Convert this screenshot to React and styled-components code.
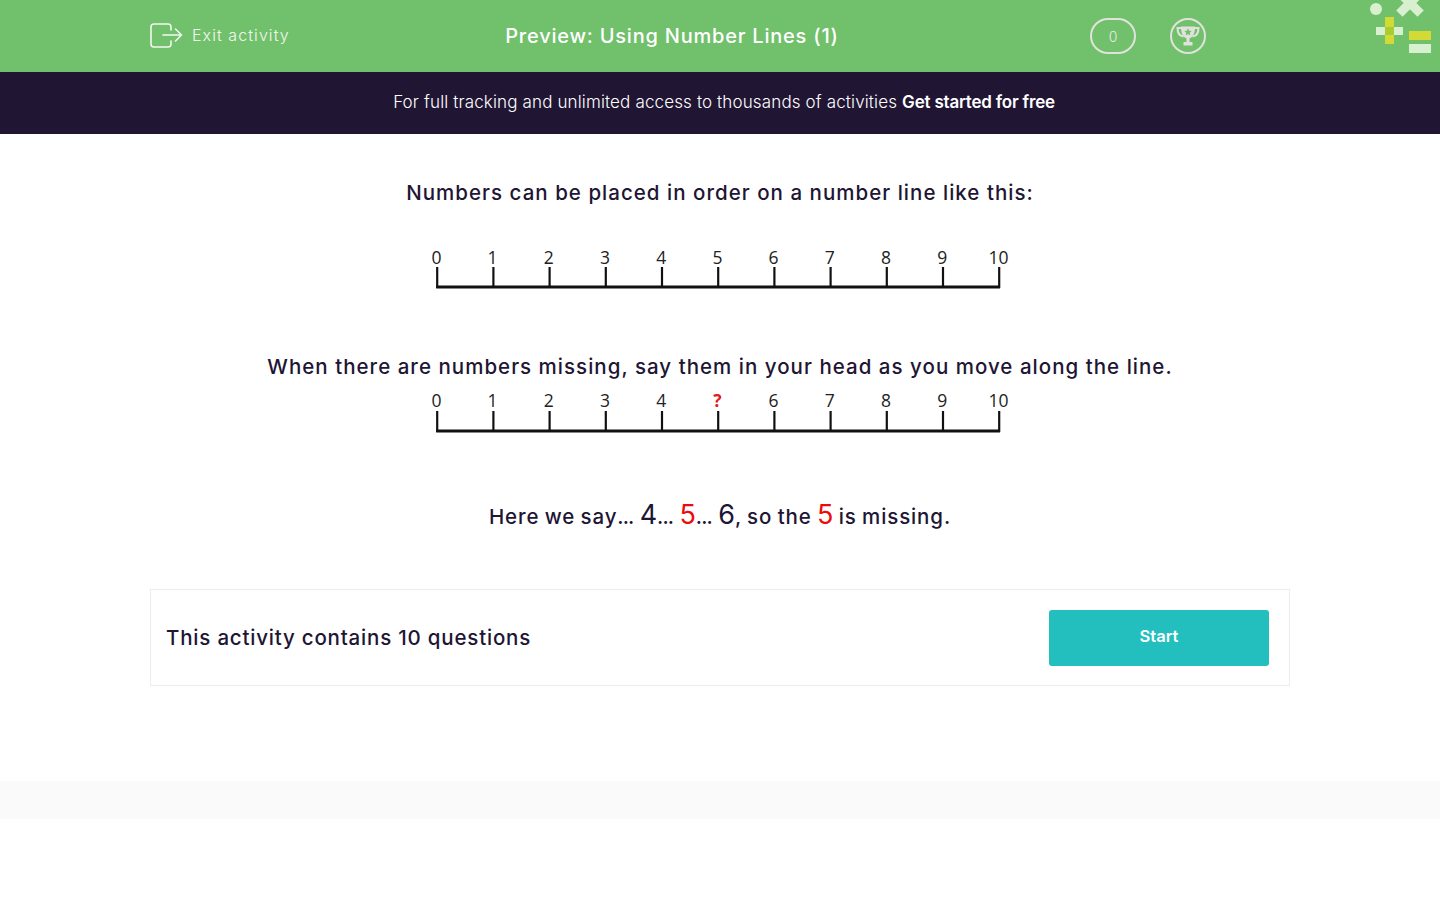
import styled, { createGlobalStyle } from 'styled-components'

const GlobalStyle = createGlobalStyle`
    html, body { margin: 0; padding: 0; background: #fff; }
    body { font-family: "Inter", "Open Sans", sans-serif; color: #211534; }
`

const Page = styled.div`
    min-height: 900px;
    position: relative;
    overflow: hidden;
`

const Header = styled.header`
    height: 72px;
    background: #71c06c;
    display: flex;
    justify-content: center;
`

const HeaderInner = styled.div`
    width: 1140px;
    display: grid;
    grid-template-columns: 140px 1fr 140px;
    align-items: center;
`

const Exit = styled.a`
    display: flex;
    align-items: center;
    gap: 9px;
    padding-bottom: 2px;
    color: #f2f8ee;
    font-size: 16px;
    letter-spacing: 1.07px;
    white-space: nowrap;
    font-weight: 300;
`

const Title = styled.h1`
    margin: 0;
    padding-right: 96px;
    text-align: center;
    color: #fff;
    font-size: 20px;
    font-weight: 500;
    letter-spacing: 0.78px;
    white-space: nowrap;
`

const Scores = styled.div`
    position: absolute;
    top: 18px;
    left: 1090px;
    display: flex;
    gap: 34px;
`

const ScorePill = styled.div`
    width: 46px;
    height: 36px;
    box-sizing: border-box;
    border: 2px solid #e2e2dc;
    border-radius: 18px;
    display: flex;
    align-items: center;
    justify-content: center;
    color: #e8ece4;
    font-size: 14px;
    font-weight: 300;
`

const TrophyRing = styled.div`
    width: 36px;
    height: 36px;
    box-sizing: border-box;
    border: 2px solid #e2e2dc;
    border-radius: 50%;
    display: flex;
    align-items: center;
    justify-content: center;
`

const Corner = styled.svg`
    position: absolute;
    top: 0;
    right: 0;
`

const Banner = styled.div`
    height: 62px;
    background: #211534;
    color: #fff;
    display: flex;
    align-items: center;
    justify-content: center;
    padding: 0 0 3px 8px;
    box-sizing: border-box;
    font-size: 17px;
    font-weight: 300;
    letter-spacing: 0.14px;
    gap: 5px;
`

const Strong = styled.b`
    font-weight: 600;
    letter-spacing: -0.2px;
`

const Content = styled.main`
    padding-top: 44px;
    display: flex;
    flex-direction: column;
    align-items: center;
`

const Line = styled.p`
    margin: ${p => p.$top || 0}px 0 0;
    height: 30px;
    line-height: 30px;
    font-size: 20.5px;
    font-weight: 500;
    letter-spacing: ${p => p.$spacing || 1.02}px;
    word-spacing: ${p => p.$words || 0}px;
    white-space: nowrap;
    color: #211534;
`

const Big = styled.span`
    font-size: 27px;
    font-weight: 400;
    letter-spacing: 0;
    color: ${p => (p.$red ? '#ec0c0c' : '#211534')};
`

const Dots = styled.span`
    letter-spacing: -0.9px;
    margin-right: 1px;
`

const Figure = styled.svg`
    display: block;
    margin-top: ${p => p.$top}px;
`

const Card = styled.section`
    box-sizing: border-box;
    width: 1140px;
    height: 97px;
    margin-top: 59px;
    padding: 0 20px 0 15px;
    border: 1px solid #ececec;
    display: flex;
    align-items: center;
    justify-content: space-between;
`

const CardText = styled.span`
    font-size: 20.5px;
    font-weight: 500;
    letter-spacing: 0.8px;
    color: #211534;
`

const StartButton = styled.button`
    width: 220px;
    height: 56px;
    border: 0;
    border-radius: 3px;
    background: #23bfbf;
    color: #fff;
    font-family: inherit;
    font-size: 16.5px;
    font-weight: 600;
    padding: 0 0 4px;
`

const FooterBand = styled.div`
    height: 38px;
    margin-top: 95px;
    background: #fafafa;
`

function ExitIcon() {
    return (
        <svg width="33" height="26" viewBox="0 0 33 26" fill="none" stroke="#f2f8ee" strokeWidth="1.6" strokeLinecap="round" strokeLinejoin="round">
            <path d="M21 8V5A3 3 0 0 0 18 2H4A3 3 0 0 0 1 5V22A3 3 0 0 0 4 25H18A3 3 0 0 0 21 22V19" />
            <path d="M13 13H31.5M25.5 7L31.5 13L25.5 19" />
        </svg>
    )
}

function TrophyIcon() {
    return (
        <svg width="24" height="24" viewBox="0 0 24 24">
            <path fill="none" stroke="#e2e2dc" strokeWidth="2" d="M6 4H1.5C1.5 9 3.5 12 7.5 12.5M18 4H22.5C22.5 9 20.5 12 16.5 12.5" />
            <path fill="#e2e2dc" d="M5 2.5H19C19 9 17 13 13.5 14.5V18H16.5V21.5H7.5V18H10.5V14.5C7 13 5 9 5 2.5Z" />
            <path fill="#71c06c" d="M12 4.2L13.1 6.7L15.7 7L13.8 8.8L14.3 11.4L12 10.1L9.7 11.4L10.2 8.8L8.3 7L10.9 6.7Z" />
        </svg>
    )
}

function CornerMark() {
    return (
        <Corner width="80" height="60" viewBox="0 0 80 60">
            <circle cx="16" cy="9" r="6" fill="#d8f0d0" />
            <rect x="35" y="-1.5" width="30" height="9" fill="#d8f0d0" transform="rotate(45 50 3)" />
            <rect x="35" y="-1.5" width="30" height="9" fill="#d8f0d0" transform="rotate(-45 50 3)" />
            <rect x="16" y="27" width="27" height="8" fill="#d8f0d0" />
            <rect x="25" y="17" width="9" height="27" fill="#d3d935" />
            <rect x="25" y="27" width="9" height="8" fill="#a9cc30" />
            <rect x="49" y="31" width="22" height="9" fill="#d3d935" />
            <rect x="49" y="44" width="22" height="9" fill="#d8f0d0" />
        </Corner>
    )
}

// number line figure, missing = value drawn as a red question mark
function NumberLine({ missing, top, labelY }) {
    const marks = Array.from({ length: 11 }, (_, i) => i)
    return (
        <Figure $top={top} width="600" height="50" viewBox="0 0 600 50">
            {marks.map(n => {
                const x = 17.2 + n * 56.2
                return (
                    <g key={n}>
                        <line x1={x} x2={x} y1="22" y2="43" stroke="#111" strokeWidth="2.2" />
                        <text
                            x={x - 0.8}
                            y={labelY}
                            textAnchor="middle"
                            fontFamily="'Open Sans', sans-serif"
                            fontSize="17.5"
                            fontWeight={n === missing ? 700 : 400}
                            fill={n === missing ? '#e01b24' : '#222'}
                        >
                            {n === missing ? '?' : n}
                        </text>
                    </g>
                )
            })}
            <line x1="16.2" x2="580" y1="42" y2="42" stroke="#111" strokeWidth="3" />
        </Figure>
    )
}

export default function App() {
    return (
        <Page>
            <GlobalStyle />
            <Header>
                <HeaderInner>
                    <Exit><ExitIcon />Exit activity</Exit>
                    <Title>Preview: Using Number Lines (1)</Title>
                </HeaderInner>
            </Header>
            <Scores>
                <ScorePill>0</ScorePill>
                <TrophyRing><TrophyIcon /></TrophyRing>
            </Scores>
            <CornerMark />
            <Banner>
                <span>For full tracking and unlimited access to thousands of activities</span>
                <Strong>Get started for free</Strong>
            </Banner>
            <Content>
                <Line>Numbers can be placed in order on a number line like this:</Line>
                <NumberLine top={37} labelY={19} />
                <Line $top={57}>When there are numbers missing, say them in your head as you move along the line.</Line>
                <NumberLine top={7} labelY={18} missing={5} />
                <Line $top={61} $spacing={0.88} $words={-1}>
                    Here we say<Dots>...</Dots> <Big>4</Big><Dots>...</Dots> <Big $red>5</Big><Dots>...</Dots> <Big>6</Big>, so the <Big $red>5</Big> is missing.
                </Line>
                <Card>
                    <CardText>This activity contains 10 questions</CardText>
                    <StartButton>Start</StartButton>
                </Card>
            </Content>
            <FooterBand />
        </Page>
    )
}
